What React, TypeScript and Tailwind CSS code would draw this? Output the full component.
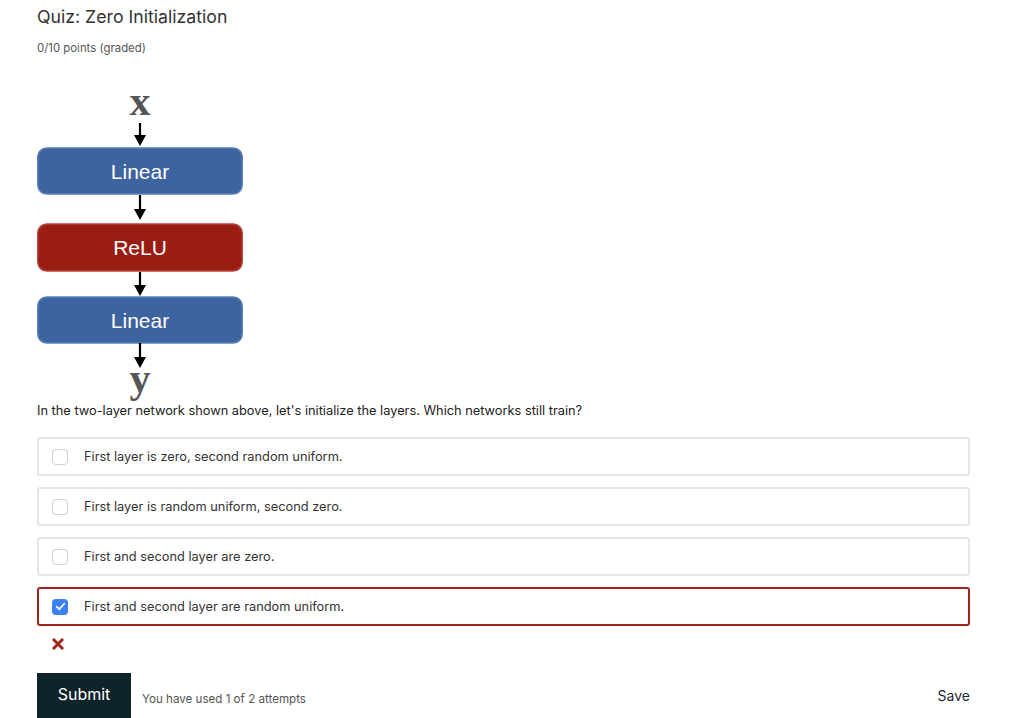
import React from 'react'

const options = [
  { label: 'First layer is zero, second random uniform.', checked: false },
  { label: 'First layer is random uniform, second zero.', checked: false },
  { label: 'First and second layer are zero.', checked: false },
  { label: 'First and second layer are random uniform.', checked: true },
]

function Arrow({ y1, y2 }: { y1: number; y2: number }) {
  return (
    <g>
      <line x1={103} y1={y1} x2={103} y2={y2 - 9} stroke="#000" strokeWidth={2.2} />
      <polygon points={`97,${y2 - 11} 109,${y2 - 11} 103,${y2}`} fill="#000" />
    </g>
  )
}

function Block({ y, h, fill, stroke, label }: { y: number; h: number; fill: string; stroke: string; label: string }) {
  return (
    <g>
      <rect x={0.75} y={y} width={204.5} height={h} rx={9} fill={fill} stroke={stroke} strokeWidth={1.5} />
      <text x={103} y={y + h / 2 + 7.5} textAnchor="middle" fill="#fff" fontSize={21} fontFamily="'Liberation Sans', Arial, sans-serif">
        {label}
      </text>
    </g>
  )
}

function Diagram() {
  return (
    <svg width={206} height={330} viewBox="0 0 206 330" className="block">
      <g transform="translate(0,12)">
        <text x={103} y={25} textAnchor="middle" fill="#555" fontSize={42} fontWeight="bold" fontFamily="'Liberation Serif', 'Times New Roman', serif">x</text>
        <Arrow y1={33} y2={56} />
        <Block y={58} h={46} fill="#3e64a0" stroke="#5a7fb8" label="Linear" />
        <Arrow y1={105} y2={130} />
        <Block y={134} h={47} fill="#9a1d14" stroke="#b8443a" label="ReLU" />
        <Arrow y1={182} y2={206} />
        <Block y={207} h={46} fill="#3e64a0" stroke="#5a7fb8" label="Linear" />
        <Arrow y1={253} y2={278} />
        <text x={103} y={302} textAnchor="middle" fill="#555" fontSize={42} fontWeight="bold" fontFamily="'Liberation Serif', 'Times New Roman', serif">y</text>
      </g>
    </svg>
  )
}

export default function App() {
  return (
    <div className="min-h-screen bg-white pl-[37px] pr-[54px] pb-10 font-['Inter','Noto_Sans',sans-serif] text-[#333]">
      <h2 className="pt-[6px] text-[17.7px] leading-[22px] text-[#333] font-normal">Quiz: Zero Initialization</h2>
      <div className="mt-[13px] text-[11.4px] leading-[14px] text-[#555]">0/10 points (graded)</div>

      <div className="mt-[23px]">
        <Diagram />
      </div>

      <p className="mt-[-5px] text-[12.8px] leading-[16px] text-[#222]">
        In the two-layer network shown above, let's initialize the layers. Which networks still train?
      </p>

      <div className="mt-[18px] flex flex-col gap-[11px]">
        {options.map((o, i) => (
          <label
            key={i}
            className={
              o.checked
                ? 'flex h-[39px] items-center rounded-[3px] border-2 border-[#a3241c] pl-[13px]'
                : 'flex h-[39px] items-center rounded-[3px] border-2 border-[#e5e5e5] pl-[13px]'
            }
          >
            {o.checked ? (
              <span className="flex h-[16px] w-[16px] items-center justify-center rounded-[4px] bg-[#3b82f6]">
                <svg width="11" height="11" viewBox="0 0 12 12">
                  <path d="M2 6.3 L4.8 9 L10 3" fill="none" stroke="#fff" strokeWidth="2" strokeLinecap="round" strokeLinejoin="round" />
                </svg>
              </span>
            ) : (
              <span className="h-[16px] w-[16px] rounded-[4px] border border-[#cfcfcf] bg-white" />
            )}
            <span className="ml-[16px] text-[12.8px] text-[#333]">{o.label}</span>
          </label>
        ))}
      </div>

      <div className="mt-[12px] pl-[15px]">
        <svg width="12" height="12" viewBox="0 0 12 12">
          <path d="M2 2 L10 10 M10 2 L2 10" stroke="#a3241c" strokeWidth="3" strokeLinecap="square" />
        </svg>
      </div>

      <div className="mt-[23px] flex items-start">
        <button className="h-[56px] w-[94px] bg-[#0e232a] pb-[14px] text-[16px] text-white">Submit</button>
        <span className="ml-[11px] mt-[18px] text-[11.6px] text-[#555]">You have used 1 of 2 attempts</span>
        <span className="ml-auto mt-[12px] text-[14px] text-[#1a2b33]">Save</span>
      </div>
    </div>
  )
}
